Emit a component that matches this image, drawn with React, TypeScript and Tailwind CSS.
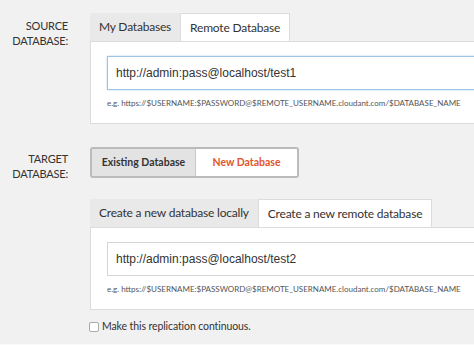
import { useState } from "react";

const hint = "e.g. https://$USERNAME:$PASSWORD@$REMOTE_USERNAME.cloudant.com/$DATABASE_NAME";

function Tabs({ tabs, active }: { tabs: string[]; active: number }) {
  return (
    <div className="flex h-[28px] items-stretch text-[12px] tracking-[-0.2px]">
      {tabs.map((t, i) => (
        <div
          key={t}
          className={
            i === active
              ? "flex items-center px-[9px] bg-white border border-b-0 border-[#dcdcdc] text-[#333]"
              : "flex items-center px-[9px] bg-[#e9e9e9] text-[#333]"
          }
        >
          {t}
        </div>
      ))}
    </div>
  );
}

function UrlPanel({ value, focused }: { value: string; focused?: boolean }) {
  return (
    <div className="w-[420px] bg-white border border-[#dcdcdc] pt-[14px] pb-[15px] pl-[16px]">
      <input
        readOnly
        value={value}
        className={`w-[400px] h-[34px] px-[8px] text-[12px] text-[#333] outline-none font-['Liberation_Sans',Arial,sans-serif] ${
          focused ? "border border-[#9ec3e6] shadow-[0_0_2px_#b9d6f2]" : "border border-[#d6d6d6]"
        }`}
      />
      <div className="mt-[8px] text-[8px] leading-[10px] text-[#555] whitespace-nowrap">{hint}</div>
    </div>
  );
}

function Label({ top, className }: { top: string; className: string }) {
  return (
    <div
      className={`w-[68px] shrink-0 text-right text-[11px] leading-[15px] tracking-[-0.2px] whitespace-nowrap text-[#333] ${className}`}
    >
      {top}
      <br />
      DATABASE:
    </div>
  );
}

export default function App() {
  const [continuous, setContinuous] = useState(false);

  return (
    <div className="w-[474px] h-[345px] overflow-hidden bg-[#f1f1f1] font-['Lato',sans-serif] text-[13px] border-b border-[#fafafa] pt-[13px]">
      <div className="flex gap-[22px]">
        <Label top="SOURCE" className="pt-[5px]" />
        <div>
          <Tabs tabs={["My Databases", "Remote Database"]} active={1} />
          <UrlPanel value="http://admin:pass@localhost/test1" focused />
        </div>
      </div>

      <div className="flex gap-[22px] mt-[23px]">
        <Label top="TARGET" className="pt-[4px]" />
        <div>
          <div className="flex h-[31px] w-fit rounded-[3px] border-2 border-[#bbb] overflow-hidden text-[10.5px] font-bold">
            <div className="flex items-center justify-center w-[104px] bg-[#e3e3e3] text-[#333] border-r border-[#c8c8c8]">
              Existing Database
            </div>
            <div className="flex items-center justify-center w-[101px] bg-white text-[#e2552f]">New Database</div>
          </div>

          <div className="mt-[21px]">
            <Tabs tabs={["Create a new database locally", "Create a new remote database"]} active={1} />
            <UrlPanel value="http://admin:pass@localhost/test2" />
          </div>

          <label className="flex items-center gap-[3px] mt-[9px] -ml-[1px] text-[10.5px] tracking-[-0.1px] text-[#333]">
            <input
              type="checkbox"
              checked={continuous}
              onChange={(e) => setContinuous(e.target.checked)}
              className="w-[10px] h-[10px] appearance-none bg-white border border-[#aaa] rounded-[2px]"
            />
            Make this replication continuous.
          </label>
        </div>
      </div>
    </div>
  );
}
